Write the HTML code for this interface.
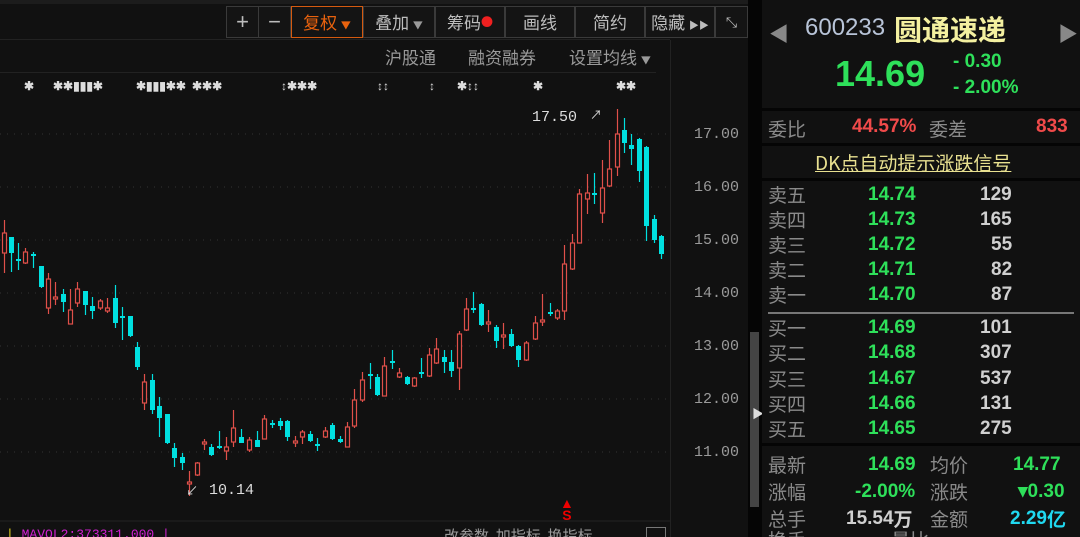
<!DOCTYPE html>
<html style="overflow:hidden;width:1080px;height:537px"><head><meta charset="utf-8"><style>
*{margin:0;padding:0;box-sizing:border-box}
body{width:1080px;height:537px;background:#111;overflow:hidden;position:relative;font-family:"Liberation Sans","Noto Sans CJK SC",sans-serif;}
.abs{position:absolute;white-space:nowrap}
.tb{position:absolute;top:6px;height:32px;border:1px solid #3a3a3a;background:#141414;color:#bdbdbd;font-size:17px;line-height:30px;text-align:center}
.cj{font-family:"Noto Sans CJK SC",sans-serif}
.g{color:#2ee05a;font-weight:bold}.w{color:#d0d0d0;font-weight:bold}.l{color:#8a8a8a}.r{color:#f04a4a;font-weight:bold}
.row{position:absolute;left:768px;width:310px;height:25px;font-size:19px;line-height:25px}
.row span{position:absolute;white-space:nowrap}
.st{position:absolute;top:79px;font-size:12px;color:#ddd;font-weight:bold}
</style></head><body>
<div class="abs" style="left:0;top:0;width:760px;height:4px;background:#1c1c1c"></div>
<div class="tb" style="left:226px;width:33px;font-size:22px">+</div>
<div class="tb" style="left:258px;width:33px;font-size:22px">−</div>
<div class="tb cj" style="left:291px;width:72px;border:1px solid #d45a10;color:#e8620e">复权 <span style="font-size:10px">▼</span></div>
<div class="tb cj" style="left:363px;width:72px">叠加 <span style="font-size:10px;color:#999">▼</span></div>
<div class="tb cj" style="left:435px;width:70px">筹码<span style="color:#f02020;font-size:12px;vertical-align:top">●</span></div>
<div class="tb cj" style="left:505px;width:70px">画线</div>
<div class="tb cj" style="left:575px;width:70px">简约</div>
<div class="tb cj" style="left:645px;width:70px">隐藏 <span style="font-size:10px">▶▶</span></div>
<div class="tb" style="left:715px;width:33px;font-size:14px">⤡</div>
<div class="abs" style="left:0;top:39px;width:670px;height:1px;background:#222"></div>
<div class="abs cj" style="left:385px;top:44px;font-size:17px;color:#9a9a9a">沪股通</div>
<div class="abs cj" style="left:468px;top:44px;font-size:17px;color:#9a9a9a">融资融券</div>
<div class="abs cj" style="left:569px;top:44px;font-size:17px;color:#9a9a9a">设置均线 <span style="font-size:10px">▼</span></div>
<div class="abs" style="left:0;top:72px;width:656px;height:1px;background:#222"></div>
<div class="st" style="left:24px">✱</div>
<div class="st" style="left:53px">✱✱▮▮▮✱</div>
<div class="st" style="left:136px">✱▮▮▮✱✱</div>
<div class="st" style="left:192px">✱✱✱</div>
<div class="st" style="left:281px">↕✱✱✱</div>
<div class="st" style="left:377px">↕↕</div>
<div class="st" style="left:429px">↕</div>
<div class="st" style="left:457px">✱↕↕</div>
<div class="st" style="left:533px">✱</div>
<div class="st" style="left:616px">✱✱</div>
<div class="abs" style="left:670px;top:40px;width:1px;height:497px;background:#222"></div>
<div class="abs" style="left:748px;top:0;width:14px;height:537px;background:#050505"></div>
<div class="abs" style="left:750px;top:332px;width:9px;height:175px;background:#444"></div>
<div class="abs" style="left:752px;top:405px;font-size:12px;color:#ddd">▶</div>
<div style="position:absolute;left:694px;top:108px;font-family:'Liberation Mono',monospace;font-size:15px;color:#9a9a9a;line-height:53px">17.00<br>16.00<br>15.00<br>14.00<br>13.00<br>12.00<br>11.00</div>
<svg class="abs" style="left:0;top:0" width="670" height="537">
<g stroke="#333" stroke-dasharray="1 6">
<line x1="0" y1="134" x2="670" y2="134"/><line x1="0" y1="187" x2="670" y2="187"/><line x1="0" y1="240" x2="670" y2="240"/><line x1="0" y1="293" x2="670" y2="293"/><line x1="0" y1="346" x2="670" y2="346"/><line x1="0" y1="399" x2="670" y2="399"/><line x1="0" y1="452" x2="670" y2="452"/>
</g>
<line x1="0" y1="521" x2="670" y2="521" stroke="#222"/>
</svg>
<svg class="abs" style="left:0;top:0" width="670" height="537" id="cs"></svg>
<div class="abs" style="left:532px;top:109px;font-family:'Liberation Mono',monospace;font-size:15px;color:#ddd">17.50</div>
<div class="abs" style="left:590px;top:106px;font-size:12px;color:#ddd">↗</div>
<div class="abs" style="left:186px;top:482px;font-size:12px;color:#ddd">↙</div>
<div class="abs" style="left:209px;top:482px;font-family:'Liberation Mono',monospace;font-size:15px;color:#ddd">10.14</div>
<div class="abs" style="left:560px;top:497px;font-size:14px;color:#e00;font-weight:bold;line-height:12px;text-align:center">▲<br>S</div>
<div class="abs" style="left:6px;top:527px;font-size:13px;color:#d020d0;font-family:'Liberation Mono',monospace"><span style="color:#e0d020">|</span> MAVOL2:373311.000 |</div>
<div class="abs cj" style="left:444px;top:525px;font-size:15px;color:#9a9a9a">改参数 &nbsp;加指标 &nbsp;换指标</div>
<div class="abs" style="left:646px;top:527px;width:20px;height:14px;border:1px solid #777"></div>
<div class="abs" style="left:762px;top:0;width:318px;height:537px;background:#111"></div>
<div class="abs" style="left:769px;top:18px;font-size:20px;color:#888">◀</div>
<div class="abs" style="left:1058px;top:18px;font-size:20px;color:#888">▶</div>
<div class="abs" style="left:805px;top:14px;font-size:24px;color:#b8c4d8">600233</div>
<div class="abs cj" style="left:894px;top:9px;font-size:28px;color:#f4f0a0;font-weight:bold">圆通速递</div>
<div class="abs g" style="left:835px;top:53px;font-size:36px">14.69</div>
<div class="abs g" style="left:953px;top:51px;font-size:19px">- 0.30</div>
<div class="abs g" style="left:953px;top:77px;font-size:19px">- 2.00%</div>
<div class="abs" style="left:762px;top:108px;width:318px;height:3px;background:#050505"></div>
<div class="abs cj l" style="left:768px;top:115px;font-size:19px">委比</div>
<div class="abs r" style="left:852px;top:116px;font-size:19px">44.57%</div>
<div class="abs cj l" style="left:929px;top:115px;font-size:19px">委差</div>
<div class="abs r" style="left:1036px;top:116px;font-size:19px">833</div>
<div class="abs" style="left:762px;top:143px;width:318px;height:3px;background:#050505"></div>
<div class="abs cj" style="left:815px;top:149px;font-size:19px;color:#e8e090;text-decoration:underline">DK点自动提示涨跌信号</div>
<div class="abs" style="left:762px;top:178px;width:318px;height:3px;background:#050505"></div>
<div class="row" style="top:182px"><span class="cj l">卖五</span><span class="g" style="left:100px">14.74</span><span class="w" style="left:212px">129</span></div>
<div class="row" style="top:207px"><span class="cj l">卖四</span><span class="g" style="left:100px">14.73</span><span class="w" style="left:212px">165</span></div>
<div class="row" style="top:232px"><span class="cj l">卖三</span><span class="g" style="left:100px">14.72</span><span class="w" style="left:223px">55</span></div>
<div class="row" style="top:257px"><span class="cj l">卖二</span><span class="g" style="left:100px">14.71</span><span class="w" style="left:223px">82</span></div>
<div class="row" style="top:282px"><span class="cj l">卖一</span><span class="g" style="left:100px">14.70</span><span class="w" style="left:223px">87</span></div>
<div class="abs" style="left:768px;top:312px;width:306px;height:2px;background:#777"></div>
<div class="row" style="top:315px"><span class="cj l">买一</span><span class="g" style="left:100px">14.69</span><span class="w" style="left:212px">101</span></div>
<div class="row" style="top:340px"><span class="cj l">买二</span><span class="g" style="left:100px">14.68</span><span class="w" style="left:212px">307</span></div>
<div class="row" style="top:366px"><span class="cj l">买三</span><span class="g" style="left:100px">14.67</span><span class="w" style="left:212px">537</span></div>
<div class="row" style="top:391px"><span class="cj l">买四</span><span class="g" style="left:100px">14.66</span><span class="w" style="left:212px">131</span></div>
<div class="row" style="top:416px"><span class="cj l">买五</span><span class="g" style="left:100px">14.65</span><span class="w" style="left:212px">275</span></div>
<div class="abs" style="left:762px;top:443px;width:318px;height:3px;background:#050505"></div>
<div class="row" style="top:452px"><span class="cj l">最新</span><span class="g" style="left:100px">14.69</span><span class="cj l" style="left:162px">均价</span><span class="g" style="left:245px">14.77</span></div>
<div class="row" style="top:479px"><span class="cj l">涨幅</span><span class="g" style="left:87px">-2.00%</span><span class="cj l" style="left:162px">涨跌</span><span class="g" style="left:250px">▾0.30</span></div>
<div class="row" style="top:506px;height:25px"><span class="cj l">总手</span><span class="w" style="left:78px">15.54<span class="cj">万</span></span><span class="cj l" style="left:162px">金额</span><span style="left:242px;color:#20d8f0;font-weight:bold">2.29<span class="cj">亿</span></span></div>
<div class="abs" style="left:768px;top:530px;width:310px;height:7px;overflow:hidden"><div class="cj l" style="font-size:19px;line-height:19px">换手 &nbsp;&nbsp;&nbsp;&nbsp;&nbsp;&nbsp;&nbsp;&nbsp;&nbsp;&nbsp;&nbsp;&nbsp;&nbsp;&nbsp;&nbsp;&nbsp;&nbsp;&nbsp;&nbsp;量比</div></div>
<script>
var d=[[0,233,253,220,273,1],[7,237,253,237,272,0],[14,259,261,243,270,0],[21,252,263,248,264,1],[29,254,256,252,268,0],[37,266,287,266,288,0],[44,279,308,273,314,1],[51,297,299,282,305,1],[59,294,302,289,312,0],[66,310,324,289,324,1],[73,289,303,282,307,1],[81,291,305,291,315,0],[88,306,311,297,319,0],[96,301,308,299,310,1],[103,308,311,298,313,1],[111,298,323,285,328,0],[118,316,318,307,340,0],[126,316,336,316,337,0],[133,347,367,342,370,0],[140,382,403,374,410,1],[148,380,410,374,414,0],[155,406,418,397,437,0],[163,414,443,414,444,0],[170,448,458,443,467,0],[178,457,463,453,470,0],[185,482,484,471,496,1],[193,463,475,462,476,1],[200,442,444,439,450,1],[207,447,455,444,456,0],[215,446,448,431,449,0],[222,447,451,437,460,1],[229,428,442,410,447,1],[237,437,443,429,443,0],[245,440,450,437,452,1],[253,440,447,431,447,0],[260,419,439,415,439,1],[268,423,425,420,428,0],[276,421,426,418,430,0],[283,421,437,420,441,0],[291,441,443,436,447,1],[298,432,437,430,444,1],[306,434,441,431,442,0],[313,444,446,438,451,0],[321,431,437,427,438,1],[328,425,439,423,440,0],[336,439,442,436,443,0],[343,427,447,422,447,1],[350,400,426,389,428,1],[358,380,400,372,402,1],[366,374,376,363,389,0],[373,377,395,374,396,0],[380,366,396,357,396,1],[388,361,363,350,369,0],[395,373,377,368,378,1],[403,377,384,376,385,0],[410,378,386,377,387,1],[417,372,374,358,378,0],[425,355,376,348,377,1],[432,349,363,338,364,1],[440,357,362,350,373,0],[447,362,371,350,377,0],[455,334,368,331,390,1],[462,309,330,298,331,1],[469,308,310,292,313,0],[477,304,325,303,326,0],[484,322,324,310,332,1],[492,327,341,325,348,0],[499,335,337,323,349,1],[507,334,346,329,347,0],[514,346,360,345,367,0],[522,343,360,341,361,1],[531,323,339,316,340,1],[538,320,322,294,326,1],[546,312,314,303,316,0],[553,311,318,309,320,1],[560,264,311,245,320,1],[568,243,269,234,270,1],[575,194,243,189,243,1],[583,193,199,174,214,1],[590,193,195,173,204,0],[598,188,213,160,223,1],[605,169,186,140,187,1],[613,134,167,109,176,1],[620,130,143,118,153,0],[627,145,149,134,165,0],[635,139,171,138,182,0],[642,147,226,146,241,0],[650,219,240,215,243,0],[657,236,254,235,259,0]];
var s='';d.forEach(function(c){var x=c[0]+2,col=c[5]?'#e0504a':'#00e0e0';
s+='<line x1="'+(x+2.5)+'" y1="'+c[3]+'" x2="'+(x+2.5)+'" y2="'+c[4]+'" stroke="'+col+'" stroke-width="1.2"/>';
var h=Math.max(c[2]-c[1],2);
if(c[5])s+='<rect x="'+(x+0.5)+'" y="'+c[1]+'" width="4" height="'+h+'" fill="#111" stroke="'+col+'" stroke-width="1.2"/>';
else s+='<rect x="'+x+'" y="'+c[1]+'" width="5" height="'+h+'" fill="'+col+'"/>';});
document.getElementById('cs').innerHTML=s;
</script>
</body></html>
